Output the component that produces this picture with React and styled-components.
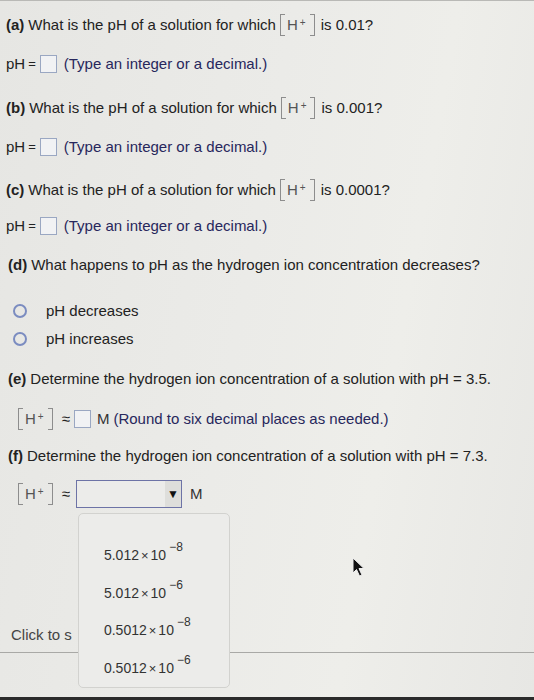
import React from "react";
import styled, { createGlobalStyle } from "styled-components";

const GlobalStyle = createGlobalStyle`
  html, body {
    margin: 0;
    padding: 0;
    background: #2b2b2b;
  }
  body {
    font-family: "Liberation Sans", Arial, sans-serif;
  }
`;

const Page = styled.div`
  position: relative;
  width: 534px;
  height: 697px;
  overflow: hidden;
  box-sizing: border-box;
  padding: 14px 0 0 6px;
  border-top: 1px solid #b9b9b6;
  background: linear-gradient(100deg, #e6e6e3 0%, #ebebe8 45%, #eeeeea 70%, #e7e7e4 100%);
  color: #222;
  font-size: 15px;
`;

const Row = styled.div`
  display: flex;
  align-items: center;
  height: 20px;
  line-height: 20px;
  margin-top: ${(p) => p.gap || 0}px;
  padding-left: ${(p) => p.indent || 0}px;
  white-space: nowrap;
`;

const Label = styled.b`
  font-weight: bold;
  margin-right: 4px;
`;

const Hint = styled.span`
  color: #27275c;
  margin-left: ${(p) => p.offset || 0}px;
`;

const Eq = styled.span`
  margin: 0 ${(p) => p.right || 4}px 0 ${(p) => p.left || 3}px;
  font-size: ${(p) => p.size || 13}px;
`;

const AnswerBox = styled.span`
  display: inline-block;
  width: 15px;
  height: 16px;
  border: 1px solid #9aa7c2;
  background: #f1f2f4;
`;

const Conc = styled.span`
  display: inline-flex;
  align-items: center;
  margin: 0 6px 0 4px;
  color: #555;
`;

const Bracket = styled.span`
  display: inline-block;
  width: 4px;
  height: 20px;
  border: 1.5px solid #8d8d8d;
  border-${(p) => (p.right ? "left" : "right")}: none;
  margin: 0 ${(p) => (p.right ? 0 : 2)}px 0 ${(p) => (p.right ? 4 : 0)}px;
`;

const Sup = styled.sup`
  font-size: 10px;
  line-height: 0;
  position: relative;
  top: -2px;
  margin-left: 2px;
`;

const RadioRow = styled(Row)`
  padding-left: 7px;
`;

const Radio = styled.span`
  display: inline-block;
  width: 10px;
  height: 10px;
  border: 2px solid #7b8cc0;
  border-radius: 50%;
  margin-right: 19px;
`;

const SelectWrap = styled.span`
  position: relative;
  display: inline-flex;
  align-items: center;
`;

const Select = styled.span`
  display: inline-flex;
  justify-content: flex-end;
  width: 104px;
  height: 26px;
  border: 1px solid #6d73a6;
  background: #ececea;
`;

const Arrow = styled.span`
  display: flex;
  align-items: center;
  justify-content: center;
  width: 16px;
  background: #dededb;
  color: #111;
  font-size: 12px;
`;

const Unit = styled.span`
  margin-left: ${(p) => p.offset || 6}px;
  color: #333;
`;

const Menu = styled.div`
  position: absolute;
  top: 33px;
  left: 2px;
  width: 152px;
  height: 175px;
  box-sizing: border-box;
  padding-top: 31px;
  border: 1px solid #d2d2cf;
  border-radius: 5px;
  background: #ececea;
  z-index: 2;
`;

const Option = styled.div`
  height: 20px;
  line-height: 20px;
  padding-left: 25px;
  margin-bottom: 17.5px;
  font-size: 14px;
  color: #333;
`;

const Times = styled.span`
  margin: 0 2px;
  font-size: 13px;
`;

const Exp = styled.sup`
  font-size: 12px;
  line-height: 0;
  position: relative;
  top: -3px;
  margin-left: 3px;
`;

const Footer = styled.div`
  margin: 121px 0 0 -6px;
  padding: 0 0 7px 11px;
  height: 20px;
  line-height: 20px;
  color: #444;
  border-bottom: 1px solid #a9a9a6;
`;

const Cursor = styled.svg`
  position: absolute;
  left: 352px;
  top: 556px;
`;

const HConc = () => (
  <Conc>
    <Bracket />
    H<Sup>+</Sup>
    <Bracket right />
  </Conc>
);

const answers = [
  ["5.012", "8"],
  ["5.012", "6"],
  ["0.5012", "8"],
  ["0.5012", "6"],
];

function App() {
  return (
    <>
      <GlobalStyle />
      <Page>
        <Row>
          <Label>(a)</Label> What is the pH of a solution for which <HConc /> is 0.01?
        </Row>
        <Row gap={19}>
          pH<Eq>=</Eq>
          <AnswerBox />
          <Hint offset={7}>(Type an integer or a decimal.)</Hint>
        </Row>

        <Row gap={24}>
          <Label>(b)</Label> What is the pH of a solution for which <HConc /> is 0.001?
        </Row>
        <Row gap={19}>
          pH<Eq>=</Eq>
          <AnswerBox />
          <Hint offset={7}>(Type an integer or a decimal.)</Hint>
        </Row>

        <Row gap={23}>
          <Label>(c)</Label> What is the pH of a solution for which <HConc /> is 0.0001?
        </Row>
        <Row gap={16}>
          pH<Eq>=</Eq>
          <AnswerBox />
          <Hint offset={7}>(Type an integer or a decimal.)</Hint>
        </Row>

        <Row gap={19} indent={2}>
          <Label>(d)</Label> What happens to pH as the hydrogen ion concentration decreases?
        </Row>
        <RadioRow gap={26}>
          <Radio />
          pH decreases
        </RadioRow>
        <RadioRow gap={8}>
          <Radio />
          pH increases
        </RadioRow>

        <Row gap={20} indent={2}>
          <Label>(e)</Label> Determine the hydrogen ion concentration of a solution with pH = 3.5.
        </Row>
        <Row gap={20} indent={8}>
          <HConc />
          <Eq left={3} right={4} size={15}>≈</Eq>
          <AnswerBox />
          <Unit>M</Unit>
          <Hint offset={4}>(Round to six decimal places as needed.)</Hint>
        </Row>

        <Row gap={17} indent={2}>
          <Label>(f)</Label> Determine the hydrogen ion concentration of a solution with pH = 7.3.
        </Row>
        <Row gap={18} indent={8}>
          <HConc />
          <Eq left={3} right={6} size={15}>≈</Eq>
          <SelectWrap>
            <Select>
              <Arrow>▼</Arrow>
            </Select>
            <Menu>
              {answers.map(([base, exp], i) => (
                <Option key={i}>
                  {base}
                  <Times>×</Times>10<Exp>−{exp}</Exp>
                </Option>
              ))}
            </Menu>
          </SelectWrap>
          <Unit offset={8}>M</Unit>
        </Row>

        <Footer>Click to s</Footer>

        <Cursor width="14" height="20" viewBox="0 0 14 20">
          <path d="M1 1 L1 16 L4.5 12.5 L7.5 19 L10 18 L7 11.5 L12 11.5 Z" fill="#111" stroke="#eee" strokeWidth="1" />
        </Cursor>
      </Page>
    </>
  );
}

export default App;
